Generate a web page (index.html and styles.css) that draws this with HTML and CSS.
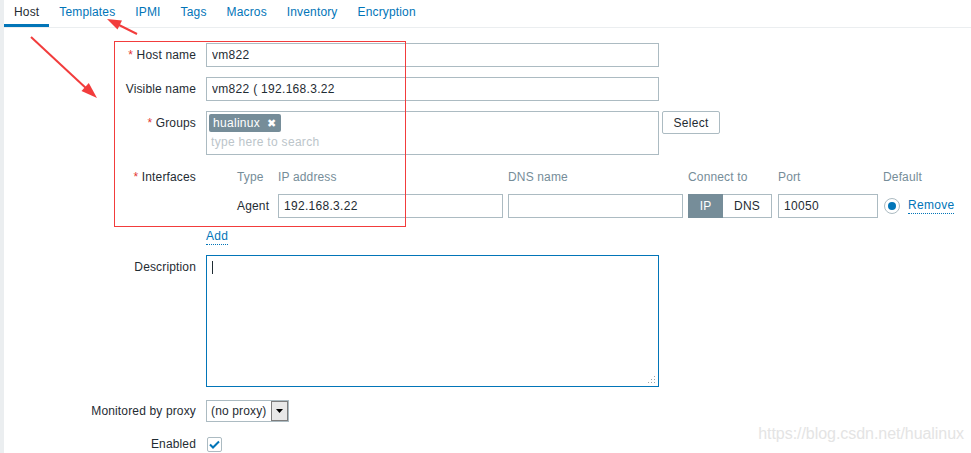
FILE: index.html
```html
<!DOCTYPE html>
<html>
<head>
<meta charset="utf-8">
<link rel="stylesheet" href="styles.css">
</head>
<body>
<div class="page">
  <ul class="tabs">
    <li class="tab active">Host</li>
    <li class="tab">Templates</li>
    <li class="tab">IPMI</li>
    <li class="tab">Tags</li>
    <li class="tab">Macros</li>
    <li class="tab">Inventory</li>
    <li class="tab">Encryption</li>
  </ul>

  <div class="form">
    <div class="row">
      <div class="lbl"><span class="req">*</span> Host name</div>
      <div class="val"><input class="input wide" type="text" value="vm822"></div>
    </div>
    <div class="row">
      <div class="lbl">Visible name</div>
      <div class="val"><input class="input wide" type="text" value="vm822 ( 192.168.3.22"></div>
    </div>
    <div class="row">
      <div class="lbl"><span class="req">*</span> Groups</div>
      <div class="val flex">
        <div class="multiselect">
          <div class="tags"><span class="tag">hualinux <span class="tag-x">✖</span></span></div>
          <div class="placeholder">type here to search</div>
        </div>
        <button class="btn">Select</button>
      </div>
    </div>
    <div class="row row-iface">
      <div class="lbl"><span class="req">*</span> Interfaces</div>
      <div class="val">
        <div class="iface head">
          <div class="c0"></div>
          <div class="c1">Type</div>
          <div class="c2">IP address</div>
          <div class="c3">DNS name</div>
          <div class="c4">Connect to</div>
          <div class="c5">Port</div>
          <div class="c6">Default</div>
        </div>
        <div class="iface body">
          <div class="c0"></div>
          <div class="c1">Agent</div>
          <div class="c2"><input class="input ip" type="text" value="192.168.3.22"></div>
          <div class="c3"><input class="input dns" type="text" value=""></div>
          <div class="c4">
            <div class="toggle"><span class="opt on">IP</span><span class="opt">DNS</span></div>
          </div>
          <div class="c5"><input class="input port" type="text" value="10050"></div>
          <div class="c6"><span class="radio"><span class="dot"></span></span><span class="link">Remove</span></div>
        </div>
      </div>
    </div>
    <div class="row row-add">
      <div class="lbl"></div>
      <div class="val"><span class="link add">Add</span></div>
    </div>
    <div class="row row-desc">
      <div class="lbl">Description</div>
      <div class="val">
        <div class="textarea"><span class="caret"></span>
          <svg class="grip" width="8" height="8" viewBox="0 0 8 8"><g fill="#9aa5ab"><rect x="6" y="0" width="1" height="1"/><rect x="3" y="3" width="1" height="1"/><rect x="6" y="3" width="1" height="1"/><rect x="0" y="6" width="1" height="1"/><rect x="3" y="6" width="1" height="1"/><rect x="6" y="6" width="1" height="1"/></g></svg>
        </div>
      </div>
    </div>
    <div class="row row-proxy">
      <div class="lbl">Monitored by proxy</div>
      <div class="val">
        <div class="select"><span class="select-text">(no proxy)</span><span class="select-btn"><svg width="7" height="4" viewBox="0 0 7 4"><path d="M0 0h7L3.5 4z" fill="#000"/></svg></span></div>
      </div>
    </div>
    <div class="row row-check">
      <div class="lbl">Enabled</div>
      <div class="val"><span class="checkbox"><svg width="11" height="9" viewBox="0 0 11 9"><path d="M1 4.5l3 3L10 1.5" fill="none" stroke="#0275b8" stroke-width="2"/></svg></span></div>
    </div>
  </div>

  <div class="redbox"></div>
  <svg class="arrows" width="971" height="453" viewBox="0 0 971 453">
    <g fill="#f23c3c" stroke="#f23c3c">
      <line x1="31" y1="37" x2="88" y2="90" stroke-width="2"/>
      <polygon points="97,98 81.5,91 88.8,83" stroke="none"/>
      <line x1="137" y1="34" x2="117" y2="24" stroke-width="2"/>
      <polygon points="107,19 122,20.5 117.5,29.5" stroke="none"/>
    </g>
  </svg>
  <div class="watermark">https://blog.csdn.net/hualinux</div>
</div>
</body>
</html>
```

FILE: styles.css
```css
html, body {
  margin: 0;
  padding: 0;
  background: #ffffff;
}
body {
  font-family: "Liberation Sans", Arial, sans-serif;
  font-size: 12px;
  letter-spacing: 0.15px;
  color: #1f2c33;
}
.page {
  position: relative;
  width: 971px;
  height: 453px;
  overflow: hidden;
  border-left: 4px solid #ebeef0;
  box-sizing: border-box;
}
.tabs {
  list-style: none;
  margin: 0;
  padding: 0;
  display: flex;
  border-bottom: 1px solid #ebeef0;
  height: 28px;
  box-sizing: border-box;
}
.tab {
  padding: 0 10px;
  line-height: 25px;
  height: 27px;
  box-sizing: border-box;
  color: #0275b8;
  border-bottom: 3px solid transparent;
}
.tab.active {
  color: #1f2c33;
  border-bottom-color: #0275b8;
}
.form {
  padding-top: 15px;
}
.row {
  display: grid;
  grid-template-columns: 192px 1fr;
  column-gap: 10px;
  margin-bottom: 10px;
}
.lbl {
  text-align: right;
  line-height: 24px;
  white-space: nowrap;
}
.req {
  color: #e33734;
}
.val {
  min-width: 0;
}
.flex {
  display: flex;
  align-items: flex-start;
  gap: 3px;
}
.input {
  font-family: "Liberation Sans", Arial, sans-serif;
  font-size: 12px;
  letter-spacing: 0.3px;
  color: #1f2c33;
  height: 24px;
  box-sizing: border-box;
  border: 1px solid #acbbc2;
  padding: 0 5px;
  margin: 0;
  background: #fff;
  outline: none;
  display: block;
}
.wide { width: 453px; }
.ip { width: 225px; }
.dns { width: 175px; }
.port { width: 100px; }
.multiselect {
  width: 453px;
  height: 44px;
  box-sizing: border-box;
  border: 1px solid #acbbc2;
  padding: 2px;
}
.tags {
  display: flex;
}
.tag {
  background: #768d99;
  color: #fff;
  height: 18px;
  line-height: 18px;
  padding: 0 5px 0 4px;
  border-radius: 2px;
  font-size: 12px;
  letter-spacing: 0.3px;
}
.tag-x {
  font-size: 11px;
  margin-left: 3px;
}
.placeholder {
  color: #bcc5ca;
  line-height: 18px;
  padding-left: 2px;
  margin-top: 1px;
  letter-spacing: 0.3px;
}
.btn {
  font-family: "Liberation Sans", Arial, sans-serif;
  font-size: 12px;
  letter-spacing: 0.3px;
  color: #1f2c33;
  width: 58px;
  height: 23px;
  background: #fff;
  border: 1px solid #acbbc2;
  border-radius: 2px;
  padding: 0;
  margin: 0;
}
.row-iface .lbl {
  line-height: 24px;
}
.iface {
  display: flex;
  align-items: center;
}
.iface.head {
  height: 24px;
  color: #768d99;
  margin-bottom: 5px;
}
.iface.body {
  height: 24px;
}
.c0 { width: 31px; }
.c1 { width: 41px; }
.c2 { width: 230px; }
.c3 { width: 180px; }
.c4 { width: 90px; }
.c5 { width: 105px; }
.c6 { display: flex; align-items: center; }
.toggle {
  display: flex;
  width: 84px;
  height: 24px;
  box-sizing: border-box;
}
.opt {
  display: flex;
  align-items: center;
  justify-content: center;
  box-sizing: border-box;
  border: 1px solid #acbbc2;
  height: 24px;
}
.opt.on {
  width: 35px;
  background: #768d99;
  border-color: #768d99;
  color: #fff;
}
.opt:not(.on) {
  width: 49px;
  border-left: none;
}
.radio {
  width: 16px;
  height: 16px;
  box-sizing: border-box;
  border: 1px solid #acbbc2;
  border-radius: 50%;
  display: flex;
  align-items: center;
  justify-content: center;
  margin-left: 1px;
  margin-right: 8px;
}
.dot {
  width: 8px;
  height: 8px;
  border-radius: 50%;
  background: #0275b8;
}
.link {
  color: #0275b8;
  border-bottom: 1px dotted #0275b8;
  line-height: 15px;
  letter-spacing: 0.3px;
}
.row-add {
  margin-bottom: 10px;
}
.row-add .val {
  line-height: 16px;
}
.add {
  display: inline-block;
  line-height: 16px;
}
.row-desc {
  margin-bottom: 13px;
}
.textarea {
  position: relative;
  width: 453px;
  height: 132px;
  box-sizing: border-box;
  border: 1px solid #0275b8;
}
.caret {
  position: absolute;
  left: 5px;
  top: 5px;
  width: 1px;
  height: 13px;
  background: #1f2c33;
}
.grip {
  position: absolute;
  right: 2px;
  bottom: 2px;
}
.row-proxy .lbl {
  line-height: 22px;
}
.select {
  display: flex;
  width: 83px;
  height: 22px;
  box-sizing: border-box;
  border: 1px solid #acbbc2;
  background: #fff;
  align-items: center;
}
.select-text {
  flex: 1;
  padding-left: 4px;
  white-space: nowrap;
}
.select-btn {
  width: 17px;
  height: 20px;
  box-sizing: border-box;
  border: 1px solid #7d7d7d;
  background: #e8e8e8;
  display: flex;
  align-items: center;
  justify-content: center;
}
.row-check .val {
  display: flex;
  align-items: center;
}
.checkbox {
  width: 15px;
  height: 15px;
  box-sizing: border-box;
  border: 1px solid #acbbc2;
  border-radius: 2px;
  display: flex;
  align-items: center;
  justify-content: center;
  margin-left: 1px;
}
.redbox {
  position: absolute;
  left: 110px;
  top: 41px;
  width: 292px;
  height: 186px;
  box-sizing: border-box;
  border: 1px solid #f23c3c;
}
.arrows {
  position: absolute;
  left: -4px;
  top: 0;
  pointer-events: none;
}
.watermark {
  position: absolute;
  right: 7px;
  top: 425px;
  font-size: 16px;
  letter-spacing: -0.05px;
  color: #e4e4e4;
  white-space: nowrap;
}
```
